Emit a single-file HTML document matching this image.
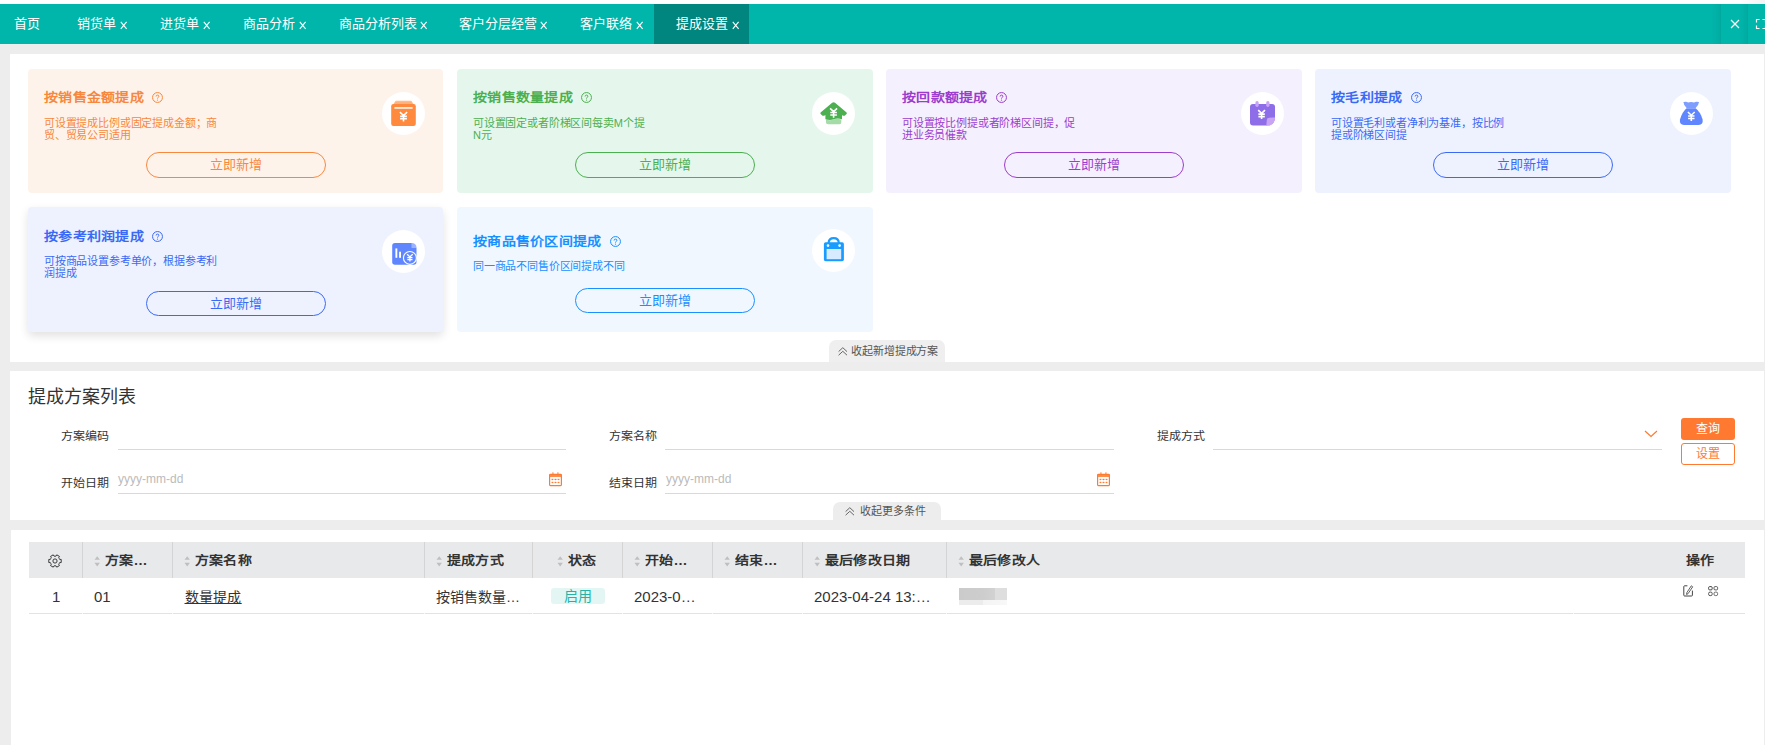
<!DOCTYPE html>
<html lang="zh-CN">
<head>
<meta charset="utf-8">
<style>
*{box-sizing:border-box;margin:0;padding:0}
html,body{width:1765px;height:745px;overflow:hidden}
body{position:relative;background:#ededed;font-family:"Liberation Sans",sans-serif;color:#333}
.a{position:absolute;white-space:nowrap}
#top{position:absolute;left:0;top:0;width:1765px;height:4px;background:linear-gradient(90deg,#fff 0,#fff 1740px,#f4f4f4 1765px)}
#bar{position:absolute;left:0;top:4px;width:1765px;height:40px;background:#00b5aa}
#act{position:absolute;left:654px;top:4px;width:95px;height:40px;background:#00867e}
.tt{position:absolute;top:17px;font-size:13px;line-height:13px;color:#fff;white-space:nowrap}
.tx{position:absolute;top:21px}
.panel{position:absolute;background:#fff}
.card{position:absolute;border-radius:4px;height:124px}
.card .ti{position:absolute;left:16px;top:22px;font-size:14px;line-height:14px;font-weight:bold;white-space:nowrap;letter-spacing:0.3px}
.sy{display:inline-block;vertical-align:top;transform:scaleY(0.88);transform-origin:0 6.5px}
.card .q{display:inline-block;vertical-align:top;margin-left:8px;margin-top:1px}
.card .ds{position:absolute;left:16px;top:48px;font-size:11px;letter-spacing:-0.17px;line-height:12px;white-space:nowrap}
.card .bt{position:absolute;left:118px;top:83px;width:180px;height:26px;border:1px solid;border-radius:13px;text-align:center;font-size:13px;line-height:24px}
.card .ic{position:absolute;right:18px;top:23px;width:43px;height:43px;border-radius:50%;background:#fff}
.card .ic svg{position:absolute;left:0;top:0}
.c1{background:#fef3eb;color:#f7883d}
.c2{background:#e5f7ec;color:#4caf50}
.c3{background:#f5f0fd;color:#9c3dcd}
.c4{background:#eef2fe;color:#3a6af5}
.c6{background:#f0f7ff;color:#1890ff}
.lbl{position:absolute;font-size:11px;line-height:11px;color:#333;white-space:nowrap}
.inp{position:absolute;height:1px;background:#d9d9d9}
.ph{position:absolute;font-size:11px;line-height:11px;color:#bbb;white-space:nowrap}
.th{position:absolute;top:554px;font-size:14px;line-height:14px;font-weight:bold;color:#333;white-space:nowrap;letter-spacing:0.2px;transform:scaleY(0.88);transform-origin:0 7.5px}
.td{position:absolute;top:590px;font-size:14px;line-height:14px;color:#333;white-space:nowrap}
.sep{position:absolute;top:542px;width:1px;height:36px;background:#d4d4d4}
</style>
</head>
<body>
<div id="top"></div>
<div id="bar"></div>
<div id="act"></div>
<div class="tt" style="left:14px">首页</div>
<div class="tt" style="left:77px">销货单</div>
<div class="tt" style="left:160px">进货单</div>
<div class="tt" style="left:243px">商品分析</div>
<div class="tt" style="left:339px">商品分析列表</div>
<div class="tt" style="left:459px">客户分层经营</div>
<div class="tt" style="left:580px">客户联络</div>
<div class="tt" style="left:676px">提成设置</div>

<svg class="a" style="left:120.0px;top:21px" width="8" height="9"><path d="M0.8 0.8L6.6 7.8M6.6 0.8L0.8 7.8" stroke="#fff" stroke-width="1.1" fill="none"/></svg>
<svg class="a" style="left:202.7px;top:21px" width="8" height="9"><path d="M0.8 0.8L6.6 7.8M6.6 0.8L0.8 7.8" stroke="#fff" stroke-width="1.1" fill="none"/></svg>
<svg class="a" style="left:298.8px;top:21px" width="8" height="9"><path d="M0.8 0.8L6.6 7.8M6.6 0.8L0.8 7.8" stroke="#fff" stroke-width="1.1" fill="none"/></svg>
<svg class="a" style="left:419.9px;top:21px" width="8" height="9"><path d="M0.8 0.8L6.6 7.8M6.6 0.8L0.8 7.8" stroke="#fff" stroke-width="1.1" fill="none"/></svg>
<svg class="a" style="left:540.4px;top:21px" width="8" height="9"><path d="M0.8 0.8L6.6 7.8M6.6 0.8L0.8 7.8" stroke="#fff" stroke-width="1.1" fill="none"/></svg>
<svg class="a" style="left:635.9px;top:21px" width="8" height="9"><path d="M0.8 0.8L6.6 7.8M6.6 0.8L0.8 7.8" stroke="#fff" stroke-width="1.1" fill="none"/></svg>
<svg class="a" style="left:732.2px;top:21px" width="8" height="9"><path d="M0.8 0.8L6.6 7.8M6.6 0.8L0.8 7.8" stroke="#fff" stroke-width="1.1" fill="none"/></svg>
<div class="a" style="left:1712px;top:4px;width:9px;height:40px;background:linear-gradient(90deg,rgba(0,0,0,0),rgba(0,0,0,0.05))"></div>
<div class="a" style="left:1720px;top:4px;width:1px;height:40px;background:#00a89e"></div>
<div class="a" style="left:1740px;top:4px;width:7px;height:40px;background:linear-gradient(90deg,rgba(0,0,0,0),rgba(0,0,0,0.05))"></div>
<div class="a" style="left:1747px;top:4px;width:1px;height:40px;background:#00a89e"></div>
<svg class="a" style="left:1730px;top:19px" width="10" height="10"><path d="M1 1L9 9M9 1L1 9" stroke="#fff" stroke-width="1.2" fill="none"/></svg>
<svg class="a" style="left:1755px;top:18px" width="12" height="12"><path d="M1.5 4.5V1.5H4.5M1.5 7.5V10.5H4.5M7.5 1.5H10.5V4.5M7.5 10.5H10.5V7.5" stroke="#fff" stroke-width="1.2" fill="none"/></svg>
<!-- panel 1 -->
<div class="panel" style="left:10px;top:54px;width:1754px;height:308px"></div>
<!--CARDS-->
<div class="card c1" style="left:28px;top:69px;width:415px;height:124px"><div class="ti" style="top:22px"><span class="sy">按销售金额提成</span><svg class="q" width="11" height="11"><circle cx="5.5" cy="5.5" r="4.95" stroke="#f7883d" stroke-width="1" fill="none"/><path d="M4.1 4.5Q4.1 3.1 5.5 3.1Q6.9 3.1 6.9 4.3Q6.9 5.0 6.1 5.4Q5.5 5.7 5.5 6.6" stroke="#f7883d" stroke-width="1" fill="none"/><circle cx="5.5" cy="8.1" r="0.6" fill="#f7883d"/></svg></div><div class="ds" style="top:48px">可设置提成比例或固定提成金额；商<br>贸、贸易公司适用</div><div class="bt" style="top:83px;left:118px;height:26px;line-height:24px">立即新增</div><div class="ic" style="top:23px"><svg width="43" height="43"><path d="M13.8 9.2H29.2L31 12H12Z" fill="#ffb27e" stroke="#ffb27e" stroke-width="0.8" stroke-linejoin="round"/><rect x="9.2" y="12" width="24.6" height="22" rx="2.2" fill="#ff8a3d"/><rect x="12.4" y="15.2" width="18.2" height="1.5" fill="#fff"/><path d="M17.90 20.20L21.50 23.51L25.10 20.20M21.50 23.51V29.40M18.10 24.34H24.90M18.10 26.82H24.90" stroke="#fff" stroke-width="1.6" fill="none"/></svg></div></div>
<div class="card c2" style="left:457px;top:69px;width:416px;height:124px"><div class="ti" style="top:22px"><span class="sy">按销售数量提成</span><svg class="q" width="11" height="11"><circle cx="5.5" cy="5.5" r="4.95" stroke="#4caf50" stroke-width="1" fill="none"/><path d="M4.1 4.5Q4.1 3.1 5.5 3.1Q6.9 3.1 6.9 4.3Q6.9 5.0 6.1 5.4Q5.5 5.7 5.5 6.6" stroke="#4caf50" stroke-width="1" fill="none"/><circle cx="5.5" cy="8.1" r="0.6" fill="#4caf50"/></svg></div><div class="ds" style="top:48px">可设置固定或者阶梯区间每卖M个提<br>N元</div><div class="bt" style="top:83px;left:118px;height:26px;line-height:24px">立即新增</div><div class="ic" style="top:23px"><svg width="43" height="43"><path d="M14 27.5V30.5Q14 32.3 16 32.3H27.3Q29.3 32.3 29.3 30.5V27.5Q25 26 21.5 27.5Q18 29 14 27.5Z" fill="#a5dba8"/><path d="M21.6 10.2Q22.4 10.2 23 10.8L34.6 20.4Q35.4 21.6 34 22.6L33 23.4Q31.8 24.2 30.2 23.2L30 23V27.3Q25.5 25.8 21.8 27.3Q18 28.8 13.4 27.3V23L13 23.2Q11.4 24.2 10.2 23.4L9.2 22.6Q7.8 21.6 8.6 20.4L20.2 10.8Q20.8 10.2 21.6 10.2Z" fill="#4caf50"/><path d="M18.10 16.30L21.60 19.68L25.10 16.30M21.60 19.68V25.70M18.30 20.53H24.90M18.30 23.07H24.90" stroke="#fff" stroke-width="1.6" fill="none"/></svg></div></div>
<div class="card c3" style="left:886px;top:69px;width:416px;height:124px"><div class="ti" style="top:22px"><span class="sy">按回款额提成</span><svg class="q" width="11" height="11"><circle cx="5.5" cy="5.5" r="4.95" stroke="#9c3dcd" stroke-width="1" fill="none"/><path d="M4.1 4.5Q4.1 3.1 5.5 3.1Q6.9 3.1 6.9 4.3Q6.9 5.0 6.1 5.4Q5.5 5.7 5.5 6.6" stroke="#9c3dcd" stroke-width="1" fill="none"/><circle cx="5.5" cy="8.1" r="0.6" fill="#9c3dcd"/></svg></div><div class="ds" style="top:48px">可设置按比例提或者阶梯区间提，促<br>进业务员催款</div><div class="bt" style="top:83px;left:118px;height:26px;line-height:24px">立即新增</div><div class="ic" style="top:23px"><svg width="43" height="43"><path d="M12 12H31Q34 12 34 15V25Q34 33.6 25.4 33.6H12Q9 33.6 9 30.6V15Q9 12 12 12Z" fill="#8d6de8"/><path d="M34 25.6Q34 33.6 26 33.6H25.4Q25.6 27 26.5 26.2Q27.5 25.4 34 25.6Z" fill="#c9a4f4"/><rect x="14.4" y="9" width="3.3" height="6" rx="1.65" fill="#c9a4f4"/><rect x="25.2" y="9" width="3.3" height="6" rx="1.65" fill="#c9a4f4"/><path d="M17.20 18.10L20.60 21.34L24.00 18.10M20.60 21.34V27.10M17.40 22.15H23.80M17.40 24.58H23.80" stroke="#fff" stroke-width="1.6" fill="none"/></svg></div></div>
<div class="card c4" style="left:1315px;top:69px;width:416px;height:124px"><div class="ti" style="top:22px"><span class="sy">按毛利提成</span><svg class="q" width="11" height="11"><circle cx="5.5" cy="5.5" r="4.95" stroke="#3a6af5" stroke-width="1" fill="none"/><path d="M4.1 4.5Q4.1 3.1 5.5 3.1Q6.9 3.1 6.9 4.3Q6.9 5.0 6.1 5.4Q5.5 5.7 5.5 6.6" stroke="#3a6af5" stroke-width="1" fill="none"/><circle cx="5.5" cy="8.1" r="0.6" fill="#3a6af5"/></svg></div><div class="ds" style="top:48px">可设置毛利或者净利为基准，按比例<br>提或阶梯区间提</div><div class="bt" style="top:83px;left:118px;height:26px;line-height:24px">立即新增</div><div class="ic" style="top:23px"><svg width="43" height="43"><path d="M13.4 10Q17 9.2 18 10.6Q21 9.4 24.2 10.6Q25.4 9.2 29 10Q28.6 13.6 25.6 16H16.6Q13.8 13.6 13.4 10Z" fill="#7d9dff"/><path d="M16.6 16.2H25.6Q30.6 20 32.6 27.6Q33.4 33 28.6 33H14Q9.2 33 10 27.6Q12 20 16.6 16.2Z" fill="#5f86ff"/><path d="M17.90 20.00L21.30 23.24L24.70 20.00M21.30 23.24V29.00M18.10 24.05H24.50M18.10 26.48H24.50" stroke="#fff" stroke-width="1.6" fill="none"/></svg></div></div>
<div class="card c4" style="left:28px;top:207px;width:415px;height:125px;box-shadow:0 4px 10px rgba(0,0,0,0.12)"><div class="ti" style="top:23px"><span class="sy">按参考利润提成</span><svg class="q" width="11" height="11"><circle cx="5.5" cy="5.5" r="4.95" stroke="#3a6af5" stroke-width="1" fill="none"/><path d="M4.1 4.5Q4.1 3.1 5.5 3.1Q6.9 3.1 6.9 4.3Q6.9 5.0 6.1 5.4Q5.5 5.7 5.5 6.6" stroke="#3a6af5" stroke-width="1" fill="none"/><circle cx="5.5" cy="8.1" r="0.6" fill="#3a6af5"/></svg></div><div class="ds" style="top:48px">可按商品设置参考单价，根据参考利<br>润提成</div><div class="bt" style="top:84px;left:118px;height:25px;line-height:23px">立即新增</div><div class="ic" style="top:23px"><svg width="43" height="43"><path d="M13 13H29.5L34.5 18V32Q34.5 34.8 31.7 34.8H13Q10.2 34.8 10.2 32V15.8Q10.2 13 13 13Z" fill="#5f86ff"/><path d="M29.5 13Q34.5 13 34.5 18H29.5Z" fill="#9ab2ff"/><rect x="13.4" y="18.4" width="1.9" height="9.4" fill="#fff"/><rect x="17.1" y="21.7" width="1.9" height="6.1" fill="#fff"/><circle cx="27.9" cy="27.9" r="7" fill="#fff"/><circle cx="27.9" cy="27.9" r="5.9" fill="#5f86ff"/><path d="M25.10 24.20L27.90 26.86L30.70 24.20M27.90 26.86V31.60M25.30 27.53H30.50M25.30 29.53H30.50" stroke="#fff" stroke-width="1.3" fill="none"/></svg></div></div>
<div class="card c6" style="left:457px;top:207px;width:416px;height:125px"><div class="ti" style="top:28px"><span class="sy">按商品售价区间提成</span><svg class="q" width="11" height="11"><circle cx="5.5" cy="5.5" r="4.95" stroke="#1890ff" stroke-width="1" fill="none"/><path d="M4.1 4.5Q4.1 3.1 5.5 3.1Q6.9 3.1 6.9 4.3Q6.9 5.0 6.1 5.4Q5.5 5.7 5.5 6.6" stroke="#1890ff" stroke-width="1" fill="none"/><circle cx="5.5" cy="8.1" r="0.6" fill="#1890ff"/></svg></div><div class="ds" style="top:53px">同一商品不同售价区间提成不同</div><div class="bt" style="top:81px;left:118px;height:25px;line-height:23px">立即新增</div><div class="ic" style="top:22px"><svg width="43" height="43"><path d="M16.6 14Q16.8 9.2 21.7 9.2Q26.6 9.2 26.8 14" stroke="#1a9bff" stroke-width="2.2" fill="none"/><rect x="11.9" y="13.3" width="20" height="19" rx="1.8" fill="#1a9bff"/><rect x="14.6" y="20" width="14.6" height="10.2" fill="#d6ebff"/><circle cx="16" cy="16.6" r="1.3" fill="#fff"/><circle cx="27.6" cy="16.6" r="1.3" fill="#fff"/></svg></div></div>
<!--/CARDS-->
<!-- panel 2 -->
<div class="panel" style="left:10px;top:371px;width:1754px;height:149px"></div>
<!-- panel 3 -->
<div class="panel" style="left:11px;top:530px;width:1753px;height:215px"></div>

<!--REST-->
<div class="a" style="left:829px;top:340px;width:116px;height:22px;background:#efefef;border-radius:7px 7px 0 0"></div>
<svg class="a" style="left:837.5px;top:346.5px" width="10" height="9"><path d="M0.6 4.6L4.8 0.7L9 4.6M0.6 8.2L4.8 4.3L9 8.2" stroke="#666" stroke-width="1" fill="none"/></svg>
<div class="lbl" style="left:851px;top:346px;color:#555;letter-spacing:-0.1px">收起新增提成方案</div>
<div class="a" style="left:28px;top:388px;font-size:18px;line-height:18px;color:#333">提成方案列表</div>
<div class="lbl" style="left:61px;top:430px;font-size:12px;line-height:12px;transform:scaleY(0.9);transform-origin:0 6px">方案编码</div>
<div class="inp" style="left:118px;top:449px;width:448px"></div>
<div class="lbl" style="left:609px;top:430px;font-size:12px;line-height:12px;transform:scaleY(0.9);transform-origin:0 6px">方案名称</div>
<div class="inp" style="left:665px;top:449px;width:449px"></div>
<div class="lbl" style="left:1157px;top:430px;font-size:12px;line-height:12px;transform:scaleY(0.9);transform-origin:0 6px">提成方式</div>
<div class="inp" style="left:1213px;top:449px;width:449px"></div>
<svg class="a" style="left:1644px;top:430px" width="14" height="8"><path d="M1 1L7 6.5L13 1" stroke="#ff7a30" stroke-width="1.2" fill="none"/></svg>
<div class="lbl" style="left:61px;top:477px;font-size:12px;line-height:12px;transform:scaleY(0.9);transform-origin:0 6px">开始日期</div>
<div class="ph" style="left:118px;top:472px;font-size:12px;line-height:14px">yyyy-mm-dd</div>
<div class="inp" style="left:118px;top:493px;width:448px"></div>
<svg class="a" style="left:549px;top:472px" width="14" height="15"><rect x="0.6" y="2.4" width="11.8" height="11.2" rx="0.8" stroke="#ff7a30" stroke-width="1.2" fill="none"/><rect x="0.6" y="2.4" width="11.8" height="2.6" fill="#ff7a30" opacity="0.85"/><rect x="3.2" y="0.3" width="1.4" height="3" fill="#ff7a30" opacity="0.7"/><rect x="8.2" y="0.3" width="1.4" height="3" fill="#ff7a30" opacity="0.7"/><path d="M2.6 7.4H10.4M2.6 10.4H10.4" stroke="#ff7a30" stroke-width="0.9" opacity="0.45"/><circle cx="3.3" cy="7.4" r="0.75" fill="#ff7a30"/><circle cx="6.5" cy="7.4" r="0.75" fill="#ff7a30"/><circle cx="9.7" cy="7.4" r="0.75" fill="#ff7a30"/><circle cx="3.3" cy="10.4" r="0.75" fill="#ff7a30"/><circle cx="6.5" cy="10.4" r="0.75" fill="#ff7a30"/><circle cx="9.7" cy="10.4" r="0.75" fill="#ff7a30"/></svg>
<div class="lbl" style="left:609px;top:477px;font-size:12px;line-height:12px;transform:scaleY(0.9);transform-origin:0 6px">结束日期</div>
<div class="ph" style="left:666px;top:472px;font-size:12px;line-height:14px">yyyy-mm-dd</div>
<div class="inp" style="left:665px;top:493px;width:449px"></div>
<svg class="a" style="left:1097px;top:472px" width="14" height="15"><rect x="0.6" y="2.4" width="11.8" height="11.2" rx="0.8" stroke="#ff7a30" stroke-width="1.2" fill="none"/><rect x="0.6" y="2.4" width="11.8" height="2.6" fill="#ff7a30" opacity="0.85"/><rect x="3.2" y="0.3" width="1.4" height="3" fill="#ff7a30" opacity="0.7"/><rect x="8.2" y="0.3" width="1.4" height="3" fill="#ff7a30" opacity="0.7"/><path d="M2.6 7.4H10.4M2.6 10.4H10.4" stroke="#ff7a30" stroke-width="0.9" opacity="0.45"/><circle cx="3.3" cy="7.4" r="0.75" fill="#ff7a30"/><circle cx="6.5" cy="7.4" r="0.75" fill="#ff7a30"/><circle cx="9.7" cy="7.4" r="0.75" fill="#ff7a30"/><circle cx="3.3" cy="10.4" r="0.75" fill="#ff7a30"/><circle cx="6.5" cy="10.4" r="0.75" fill="#ff7a30"/><circle cx="9.7" cy="10.4" r="0.75" fill="#ff7a30"/></svg>
<div class="a" style="left:1681px;top:418px;width:54px;height:22px;background:#ff7a30;border-radius:3px;color:#fff;font-size:12px;line-height:23px;text-align:center">查询</div>
<div class="a" style="left:1681px;top:443px;width:54px;height:22px;background:#fff;border:1px solid #ff7a30;border-radius:3px;color:#ff7a30;font-size:12px;line-height:21px;text-align:center">设置</div>
<div class="a" style="left:833px;top:502px;width:108px;height:18px;background:#ededed;border-radius:7px 7px 0 0"></div>
<svg class="a" style="left:844.5px;top:507px" width="10" height="9"><path d="M0.6 4.6L4.8 0.7L9 4.6M0.6 8.2L4.8 4.3L9 8.2" stroke="#666" stroke-width="1" fill="none"/></svg>
<div class="lbl" style="left:860px;top:506px;color:#555;letter-spacing:-0.1px">收起更多条件</div>
<div class="a" style="left:29px;top:542px;width:1716px;height:36px;background:#e8e9eb"></div>
<div class="sep" style="left:82px"></div>
<div class="sep" style="left:172px"></div>
<div class="sep" style="left:424px"></div>
<div class="sep" style="left:532px"></div>
<div class="sep" style="left:622px"></div>
<div class="sep" style="left:712px"></div>
<div class="sep" style="left:802px"></div>
<div class="sep" style="left:946px"></div>
<svg class="a" style="left:48px;top:553.5px" width="14" height="14"><path d="M11.24 9.45L11.63 8.60L13.21 8.55L13.21 5.45L11.63 5.40L11.24 4.55L10.70 3.79L11.45 2.40L8.76 0.85L7.93 2.19L7.00 2.10L6.07 2.19L5.24 0.85L2.55 2.40L3.30 3.79L2.76 4.55L2.37 5.40L0.79 5.45L0.79 8.55L2.37 8.60L2.76 9.45L3.30 10.21L2.55 11.60L5.24 13.15L6.07 11.81L7.00 11.90L7.93 11.81L8.76 13.15L11.45 11.60L10.70 10.21Z" stroke="#333" stroke-width="0.95" fill="none" stroke-linejoin="round"/><circle cx="7" cy="7" r="2.1" stroke="#333" stroke-width="0.95" fill="none"/></svg>
<svg class="a" style="left:94px;top:556px" width="7" height="11"><path d="M0.5 3.8L3.2 0.3L5.9 3.8Z" fill="#bfbfbf"/><path d="M0.5 6.8L3.2 10.5L5.9 6.8Z" fill="#bfbfbf"/></svg>
<div class="th" style="left:105px">方案…</div>
<svg class="a" style="left:184px;top:556px" width="7" height="11"><path d="M0.5 3.8L3.2 0.3L5.9 3.8Z" fill="#bfbfbf"/><path d="M0.5 6.8L3.2 10.5L5.9 6.8Z" fill="#bfbfbf"/></svg>
<div class="th" style="left:195px">方案名称</div>
<svg class="a" style="left:436px;top:556px" width="7" height="11"><path d="M0.5 3.8L3.2 0.3L5.9 3.8Z" fill="#bfbfbf"/><path d="M0.5 6.8L3.2 10.5L5.9 6.8Z" fill="#bfbfbf"/></svg>
<div class="th" style="left:447px">提成方式</div>
<svg class="a" style="left:557px;top:556px" width="7" height="11"><path d="M0.5 3.8L3.2 0.3L5.9 3.8Z" fill="#bfbfbf"/><path d="M0.5 6.8L3.2 10.5L5.9 6.8Z" fill="#bfbfbf"/></svg>
<div class="th" style="left:568px">状态</div>
<svg class="a" style="left:634px;top:556px" width="7" height="11"><path d="M0.5 3.8L3.2 0.3L5.9 3.8Z" fill="#bfbfbf"/><path d="M0.5 6.8L3.2 10.5L5.9 6.8Z" fill="#bfbfbf"/></svg>
<div class="th" style="left:645px">开始…</div>
<svg class="a" style="left:724px;top:556px" width="7" height="11"><path d="M0.5 3.8L3.2 0.3L5.9 3.8Z" fill="#bfbfbf"/><path d="M0.5 6.8L3.2 10.5L5.9 6.8Z" fill="#bfbfbf"/></svg>
<div class="th" style="left:735px">结束…</div>
<svg class="a" style="left:814px;top:556px" width="7" height="11"><path d="M0.5 3.8L3.2 0.3L5.9 3.8Z" fill="#bfbfbf"/><path d="M0.5 6.8L3.2 10.5L5.9 6.8Z" fill="#bfbfbf"/></svg>
<div class="th" style="left:825px">最后修改日期</div>
<svg class="a" style="left:958px;top:556px" width="7" height="11"><path d="M0.5 3.8L3.2 0.3L5.9 3.8Z" fill="#bfbfbf"/><path d="M0.5 6.8L3.2 10.5L5.9 6.8Z" fill="#bfbfbf"/></svg>
<div class="th" style="left:969px">最后修改人</div>
<div class="th" style="left:1686px">操作</div>
<div class="a" style="left:29px;top:613px;width:1716px;height:1px;background:#e3e3e3"></div>
<div class="a" style="left:82px;top:613px;width:1px;height:1px;background:#f6f6f6"></div>
<div class="a" style="left:172px;top:613px;width:1px;height:1px;background:#f6f6f6"></div>
<div class="a" style="left:424px;top:613px;width:1px;height:1px;background:#f6f6f6"></div>
<div class="a" style="left:532px;top:613px;width:1px;height:1px;background:#f6f6f6"></div>
<div class="a" style="left:622px;top:613px;width:1px;height:1px;background:#f6f6f6"></div>
<div class="a" style="left:712px;top:613px;width:1px;height:1px;background:#f6f6f6"></div>
<div class="a" style="left:802px;top:613px;width:1px;height:1px;background:#f6f6f6"></div>
<div class="a" style="left:946px;top:613px;width:1px;height:1px;background:#f6f6f6"></div>
<div class="a" style="left:1573px;top:613px;width:1px;height:1px;background:#f6f6f6"></div>
<div class="td" style="left:52px;font-size:15px">1</div>
<div class="td" style="left:94px;font-size:15px">01</div>
<div class="td" style="left:184.5px;text-decoration:underline;letter-spacing:0.3px">数量提成</div>
<div class="td" style="left:436px">按销售数量…</div>
<div class="a" style="left:551px;top:588px;width:54px;height:16px;background:#e4f6f4;color:#26b3a6;font-size:14px;line-height:16px;text-align:center;border-radius:3px">启用</div>
<div class="td" style="left:634px;font-size:15px">2023-0…</div>
<div class="td" style="left:814px;font-size:15px">2023-04-24 13:…</div>
<div class="a" style="left:959px;top:588px;width:48px;height:12px;background:linear-gradient(90deg,#cbcbcb 0,#cdcdcd 50%,#d2d2d2 75%,#dedede 75%,#dedede 100%)"></div>
<div class="a" style="left:959px;top:600px;width:48px;height:5px;background:linear-gradient(90deg,#ececec 0,#ececec 50%,#f4f4f4 50%,#f8f8f8 100%)"></div>
<svg class="a" style="left:1682.5px;top:585px" width="11" height="12"><path d="M4.4 0.8H1.6Q0.8 0.8 0.8 1.6V10.2Q0.8 11 1.6 11H8.6Q9.4 11 9.4 10.2V5.6" stroke="#444" stroke-width="1" fill="none"/><path d="M8.3 0.8L9.7 1.8L5.1 8.6L3.6 9.5L3.8 7.7Z" stroke="#444" stroke-width="0.85" fill="none" stroke-linejoin="round"/></svg>
<svg class="a" style="left:1707.5px;top:585.5px" width="11" height="11"><rect x="0.6" y="0.6" width="3.6" height="3.3" rx="1.1" stroke="#444" stroke-width="1" fill="none"/><rect x="6" y="0.6" width="3.6" height="3.3" rx="1.1" stroke="#555" stroke-width="1" fill="none"/><rect x="0.6" y="6.1" width="3.6" height="3.5" rx="1.4" stroke="#555" stroke-width="1" fill="none"/><rect x="6" y="6.1" width="3.6" height="3.5" rx="1.4" stroke="#666" stroke-width="1" fill="none"/></svg>
<!--/REST-->
</body>
</html>
